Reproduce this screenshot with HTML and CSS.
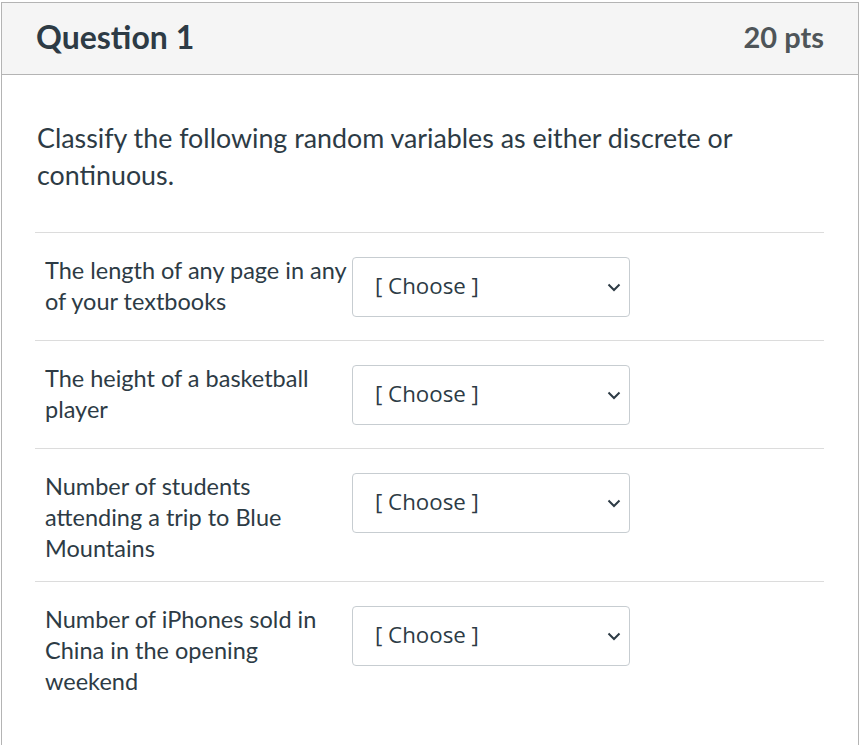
FILE: index.html
```html
<!DOCTYPE html>
<html>
<head>
<meta charset="utf-8">
<link rel="stylesheet" href="styles.css">
</head>
<body>
<div class="question">
  <div class="q-header">
    <span class="q-title">Question 1</span>
    <span class="q-pts">20 pts</span>
  </div>
  <div class="q-body">
    <p class="q-text">Classify the following random variables as either discrete or<br>continuous.</p>
    <div class="answers">
      <div class="row">
        <div class="label">The length of any page in any<br>of your textbooks</div>
        <div class="select"><span>[ Choose ]</span><svg class="chev" width="14" height="9" viewBox="0 0 14 9"><path d="M1.5 1.5 L7 7 L12.5 1.5" fill="none" stroke="#2d3b45" stroke-width="2"/></svg></div>
      </div>
      <div class="row">
        <div class="label">The height of a basketball<br>player</div>
        <div class="select"><span>[ Choose ]</span><svg class="chev" width="14" height="9" viewBox="0 0 14 9"><path d="M1.5 1.5 L7 7 L12.5 1.5" fill="none" stroke="#2d3b45" stroke-width="2"/></svg></div>
      </div>
      <div class="row">
        <div class="label">Number of students<br>attending a trip to Blue<br>Mountains</div>
        <div class="select"><span>[ Choose ]</span><svg class="chev" width="14" height="9" viewBox="0 0 14 9"><path d="M1.5 1.5 L7 7 L12.5 1.5" fill="none" stroke="#2d3b45" stroke-width="2"/></svg></div>
      </div>
      <div class="row">
        <div class="label">Number of iPhones sold in<br>China in the opening<br>weekend</div>
        <div class="select"><span>[ Choose ]</span><svg class="chev" width="14" height="9" viewBox="0 0 14 9"><path d="M1.5 1.5 L7 7 L12.5 1.5" fill="none" stroke="#2d3b45" stroke-width="2"/></svg></div>
      </div>
    </div>
  </div>
</div>
</body>
</html>
```
FILE: styles.css
```css
html, body { margin: 0; padding: 0; background: #fff; }
body { padding: 2px 0 0 1px; font-family: Lato, "Open Sans", sans-serif; color: #2d3b45; }
.question {
  width: 858px;
  height: 780px;
  border: 1px solid #b4b4b4;
  box-sizing: border-box;
}
.q-header {
  height: 72px;
  background: #f5f5f5;
  border-bottom: 1px solid #b4b4b4;
  display: flex;
  justify-content: space-between;
  align-items: center;
  padding: 0 34px 0 34px;
  box-sizing: border-box;
}
.q-title { font-size: 32px; font-weight: 700; color: #2d3b45; margin-top: -5px; }
.q-pts { font-size: 29px; font-weight: 700; color: #4f5559; margin-top: -5px; }
.q-body { padding: 45px 34px 0 33px; }
.q-text { margin: 0 0 38px 2px; font-size: 26.8px; line-height: 37px; white-space: nowrap; }
.answers { border-top: 1px solid #dcdcdc; }
.row {
  display: flex;
  align-items: flex-start;
  padding: 24px 0 23px 10px;
  border-bottom: 1px solid #dcdcdc;
}
.row:last-child { border-bottom: none; }
.label {
  width: 302px;
  font-size: 23.5px;
  line-height: 31px;
  margin: -2px 0 -6px 0;
  white-space: nowrap;
}
.select {
  margin-left: 5px;
  width: 278px;
  height: 60px;
  border: 1px solid #c7cdd1;
  border-radius: 4px;
  box-sizing: border-box;
  display: flex;
  align-items: center;
  justify-content: space-between;
  padding: 0 8px 0 22px;
  font-family: "Open Sans", sans-serif;
  font-size: 22.3px;
  color: #2d3b45;
}
.select span { margin-top: -4px; }
```
